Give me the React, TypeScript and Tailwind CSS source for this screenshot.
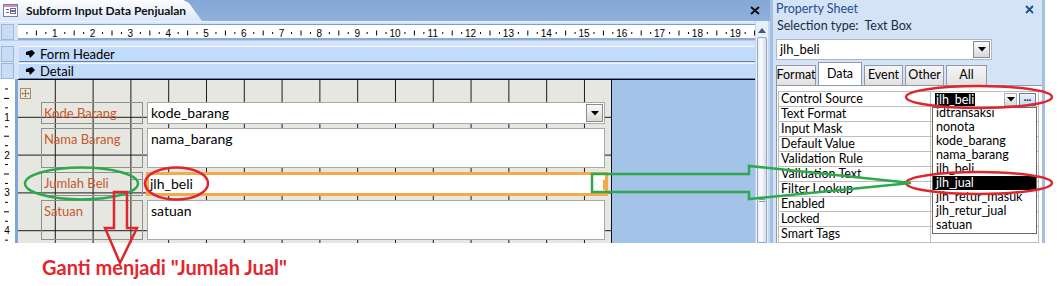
import React from "react";

const CM = 37.8;

function HRuler() {
  const w = 737;
  const items: React.ReactNode[] = [];
  for (let k = 0; k < 20; k++) {
    const base = -1 + k * CM;
    if (k > 0) {
      items.push(
        <text key={"n" + k} x={base} y={11.5} fontSize={10} textAnchor="middle" fill="#000" fontFamily="Liberation Sans, sans-serif">
          {k}
        </text>
      );
    }
    const q1 = base + CM * 0.25;
    const q2 = base + CM * 0.5;
    const q3 = base + CM * 0.75;
    items.push(<rect key={"a" + k} x={q1} y={7} width={1} height={2} fill="#000" />);
    items.push(<rect key={"b" + k} x={q2} y={5.5} width={1} height={5} fill="#000" />);
    items.push(<rect key={"c" + k} x={q3} y={7} width={1} height={2} fill="#000" />);
  }
  return (
    <svg width={w} height={15} className="block">
      {items}
    </svg>
  );
}

function VRuler() {
  const items: React.ReactNode[] = [];
  for (let k = 0; k < 5; k++) {
    const base = k * CM;
    if (k > 0) {
      items.push(
        <text key={"n" + k} x={7} y={base + 4} fontSize={10} textAnchor="middle" fill="#000" fontFamily="Liberation Sans, sans-serif">
          {k}
        </text>
      );
    }
    items.push(<rect key={"a" + k} x={5} y={base + CM * 0.25} width={3} height={1} fill="#000" />);
    items.push(<rect key={"b" + k} x={4} y={base + CM * 0.5} width={5} height={1} fill="#000" />);
    items.push(<rect key={"c" + k} x={5} y={base + CM * 0.75} width={3} height={1} fill="#000" />);
  }
  return (
    <svg width={15} height={164} className="block">
      {items}
    </svg>
  );
}

function SectionIcon() {
  return (
    <svg width="11" height="10" viewBox="0 0 11 10" className="block">
      <path d="M1 3 L7 1 L10 4 L5 9 L4 6 L1 6 Z" fill="#000" />
    </svg>
  );
}

function SectionBar({ label }: { label: string }) {
  return (
    <div className="flex h-[16px] gap-[5px]">
      <div className="w-[13px] ml-[1px] bg-[#c9dcf5] border border-[#9bb8df]" />
      <div className="flex-1 flex items-center gap-[4px] pl-[6px] bg-[#c3dbfa] border-t border-t-[#f4f8fe] border-b border-b-[#5d83bb] text-[13px] text-black leading-none">
        <SectionIcon />
        <span>{label}</span>
      </div>
    </div>
  );
}

const labelCls =
  "w-[102px] shrink-0 border-[1.5px] border-[#8e8e8e] px-[2px] pt-[2px] text-[13px] leading-[16px] text-[#c9572c]";
const boxCls = "w-[458px] shrink-0 bg-white border border-[#a8a8a8] px-[3px] pt-[1px] text-[14px] leading-[18px] text-black";

function MoveHandle() {
  return (
    <svg width="11" height="11" viewBox="0 0 11 11" className="block">
      <rect x="0.5" y="0.5" width="10" height="10" fill="#ece9dc" stroke="#9a8e80" />
      <path d="M5.5 2 V9 M2 5.5 H9" stroke="#a0785a" strokeWidth="1" />
      <path d="M5.5 1.5 L4 3 H7 Z M5.5 9.5 L4 8 H7 Z M1.5 5.5 L3 4 V7 Z M9.5 5.5 L8 4 V7 Z" fill="#a0785a" />
    </svg>
  );
}

function DropBtn({ className }: { className: string }) {
  return (
    <div className={"flex items-center justify-center border border-[#8a8a8a] bg-[linear-gradient(#fafafa,#d9d9d9)] " + className}>
      <svg width="8" height="5" viewBox="0 0 8 5">
        <path d="M0 0 H8 L4 4.5 Z" fill="#000" />
      </svg>
    </div>
  );
}

const props = [
  "Control Source",
  "Text Format",
  "Input Mask",
  "Default Value",
  "Validation Rule",
  "Validation Text",
  "Filter Lookup",
  "Enabled",
  "Locked",
  "Smart Tags",
];

const listItems = [
  "idtransaksi",
  "nonota",
  "kode_barang",
  "nama_barang",
  "jlh_beli",
  "jlh_jual",
  "jlh_retur_masuk",
  "jlh_retur_jual",
  "satuan",
];

export default function App() {
  return (
    <div className="relative w-[1058px] h-[286px] bg-white overflow-hidden font-['Lato',sans-serif]">
      <div className="flex h-[243px]">
        {/* Left design window */}
        <div className="w-[770px] shrink-0 flex flex-col bg-[#d6e4f6]">
          {/* Title bar */}
          <div className="h-[21px] flex bg-[linear-gradient(#86a8d6,#8fb0dc)] relative">
            <div className="w-[202px] h-[21px] flex items-center gap-[8px] pl-[3px] bg-[linear-gradient(#fdfeff,#dae7f7)] [clip-path:polygon(0_0,183px_0,189px_3px,202px_100%,0_100%)]">
              <svg width="15" height="13" viewBox="0 0 15 13" className="block">
                <rect x="0.5" y="0.5" width="14" height="12" fill="#fff" stroke="#7b7ba8" />
                <rect x="1" y="1" width="13" height="2" fill="#d78cb8" />
                <path d="M3 5.5 H6 M3 8.5 H6" stroke="#6a6a9a" />
                <rect x="7.5" y="4.5" width="5" height="2" fill="none" stroke="#6a6a9a" />
                <rect x="7.5" y="7.5" width="5" height="2" fill="none" stroke="#6a6a9a" />
              </svg>
              <span className="text-[12px] font-bold text-[#111] leading-none">Subform Input Data Penjualan</span>
            </div>
            <div className="flex-1" />
            <div className="w-[30px] flex items-center justify-center">
              <svg width="10" height="9" viewBox="0 0 10 9">
                <path d="M1 1 L9 8 M9 1 L1 8" stroke="#111" strokeWidth="2" />
              </svg>
            </div>
          </div>
          {/* Body */}
          <div className="flex flex-1">
            <div className="w-[755px] flex flex-col">
              {/* ruler row */}
              <div className="flex h-[19px] gap-[4px] pt-[2px] border-t border-[#eef4fc]">
                <div className="w-[13px] ml-[1px] bg-[#c9dcf5] border border-[#9bb8df]" />
                <div className="flex-1 bg-white border-t border-t-[#7c9fd0] border-b-2 border-b-[#8aabd8]">
                  <HRuler />
                </div>
              </div>
              <div className="h-[6px] border-t border-[#b3cbea]" />
              <SectionBar label="Form Header" />
              <div className="h-[1px]" />
              <SectionBar label="Detail" />
              {/* canvas row */}
              <div className="flex flex-1">
                <div className="w-[15px] bg-white">
                  <VRuler />
                </div>
                <div className="w-[3px] bg-[#7fa6dc]" />
                <div className="flex flex-1 border-t border-black">
                  <div className="w-[594px] shrink-0 border-r border-[#111] bg-[#e7e7e1] bg-[linear-gradient(to_right,transparent_37px,#1a1a1a_37px,#1a1a1a_38px,transparent_38px),linear-gradient(to_bottom,transparent_37px,#1a1a1a_37px,#1a1a1a_38px,transparent_38px)] bg-[size:37.8px_37.8px] pt-[8px] pl-[2px]">
                    <MoveHandle />
                    <div className="flex flex-col gap-[4px] mt-[3px] ml-[21px]">
                      <div className="flex gap-[4px] h-[22px]">
                        <div className={labelCls}>Kode Barang</div>
                        <div className={boxCls + " relative flex"}>
                          <span>kode_barang</span>
                          <div className="flex-1" />
                          <DropBtn className="w-[17px] h-[18px] mr-[-2px] border-[#7a7a7a]" />
                        </div>
                      </div>
                      <div className="flex gap-[4px] h-[40px]">
                        <div className={labelCls}>Nama Barang</div>
                        <div className={boxCls}>nama_barang</div>
                      </div>
                      <div className="flex gap-[4px] h-[24px]">
                        <div className={labelCls + " relative"}>
                          Jumlah Beli
                          <div className="absolute right-[-1px] top-[-1px] w-[12px] h-[8px] border border-[#8e8e8e] bg-[#e7e7e1]" />
                        </div>
                        <div className="w-[462px] ml-[-1px] shrink-0 bg-white border-[3px] border-[#f4aa4c] px-[1px] text-[14px] leading-[17px] text-black relative">
                          jlh_beli
                          <div className="absolute right-[-3px] top-[5px] w-[5px] h-[10px] bg-[#f4aa4c]" />
                        </div>
                      </div>
                      <div className="flex gap-[4px] h-[40px]">
                        <div className={labelCls}>Satuan</div>
                        <div className={boxCls}>satuan</div>
                      </div>
                    </div>
                  </div>
                  <div className="flex-1 bg-[#a4c3e9]" />
                </div>
              </div>
            </div>
            {/* scrollbar */}
            <div className="w-[13px] flex flex-col bg-[#e9eff8] border-l border-[#c5d4e8]">
              <div className="h-[16px] flex items-center justify-center pt-[2px]">
                <svg width="8" height="5" viewBox="0 0 8 5">
                  <path d="M0 5 L4 0 L8 5 Z" fill="#3c5a87" />
                </svg>
              </div>
              <div className="flex-1 mx-[1px] rounded-t-[2px] border border-[#98a9c2] bg-[linear-gradient(to_right,#e9eef6,#fbfcfe_40%,#d3dcea)] flex items-end justify-center pb-[40px]">
                <div className="flex flex-col gap-[1px]">
                  <div className="w-[6px] h-[1px] bg-[#8594ad]" />
                  <div className="w-[6px] h-[1px] bg-[#8594ad]" />
                  <div className="w-[6px] h-[1px] bg-[#8594ad]" />
                </div>
              </div>
            </div>
            <div className="w-[2px] bg-[#c9d9ee]" />
          </div>
        </div>

        {/* Property sheet */}
        <div className="w-[275px] shrink-0 flex flex-col bg-[#d5e3f6] border-l-[3px] border-r-[3px] border-[#a3bfe3]">
          <div className="h-[19px] flex items-center justify-between pl-[3px] pr-[8px]">
            <span className="text-[12.5px] text-[#1f4e8f] leading-none">Property Sheet</span>
            <svg width="9" height="9" viewBox="0 0 9 9">
              <path d="M1 1 L8 8 M8 1 L1 8" stroke="#1f4e8f" strokeWidth="1.8" />
            </svg>
          </div>
          <div className="h-[17px] pl-[4px] text-[12.5px] leading-[14px] text-[#1a2b44]">Selection type:&nbsp; Text Box</div>
          <div className="mt-[3px] ml-[3px] w-[216px] h-[21px] bg-white border border-[#a9b8cc] flex items-center pl-[3px] pr-[1px]">
            <span className="text-[13px] text-black flex-1">jlh_beli</span>
            <DropBtn className="w-[17px] h-[17px]" />
          </div>
          {/* tabs */}
          <div className="flex items-end h-[25px] ml-[3px] gap-[2px] text-[12.5px] text-black">
            <div className="w-[40px] h-[20px] border border-b-0 border-[#8f9aa8] bg-[linear-gradient(#f6f6f6,#e2e2e2)] flex items-center justify-center">Format</div>
            <div className="w-[44px] h-[23px] border border-b-0 border-[#8f9aa8] bg-white flex items-start pt-[2px] justify-center">Data</div>
            <div className="w-[39px] h-[20px] border border-b-0 border-[#8f9aa8] bg-[linear-gradient(#f6f6f6,#e2e2e2)] flex items-center justify-center">Event</div>
            <div className="w-[39px] h-[20px] border border-b-0 border-[#8f9aa8] bg-[linear-gradient(#f6f6f6,#e2e2e2)] flex items-center justify-center">Other</div>
            <div className="w-[41px] h-[20px] border border-b-0 border-[#8f9aa8] bg-[linear-gradient(#f6f6f6,#e2e2e2)] flex items-center justify-center">All</div>
          </div>
          <div className="flex-1 ml-[3px] bg-white border-l border-t border-[#8f9aa8] pt-[5px] pl-[1px] pr-[3px]">
            <div className="border border-[#bdbdbd] w-[261px]">
              {props.map((p, i) => (
                <div key={p} className={"flex h-[15px] " + (i < props.length - 1 ? "border-b border-[#bdbdbd]" : "")}>
                  <div className="w-[152px] shrink-0 border-r border-[#bdbdbd] pl-[2px] text-[12.5px] leading-[14px] text-black">{p}</div>
                  <div className="flex-1 flex items-center pl-[4px]">
                    {i === 0 && (
                      <>
                        <span className="bg-black text-white text-[12.5px] leading-[13px] px-[1px]">jlh_beli</span>
                        <div className="flex-1" />
                        <DropBtn className="w-[13px] h-[13px] border-[#b0b0b0]" />
                        <div className="w-[17px] h-[13px] ml-[2px] mr-[2px] border border-[#5d7fae] bg-[linear-gradient(#eaf2fc,#c6d9f1)] flex items-center justify-center text-[9px] font-bold leading-none text-[#123]">
                          ···
                        </div>
                      </>
                    )}
                  </div>
                </div>
              ))}
            </div>
          </div>
        </div>
      </div>

      {/* bottom annotation text */}
      <div className="pl-[42px] pt-[12px] text-[20px] font-bold leading-[24px] text-[#e3262d]">Ganti menjadi "Jumlah Jual"</div>

      {/* dropdown list overlay */}
      <div className="absolute left-[932px] top-[107px] w-[105px] h-[127px] bg-white border border-[#6a6a6a] overflow-hidden">
        <div className="mt-[-2px] flex flex-col">
          {listItems.map((it) => (
            <div
              key={it}
              className={
                "h-[14px] pl-[3px] text-[12.5px] leading-[14px] " +
                (it === "jlh_jual" ? "bg-black text-white" : "text-black")
              }
            >
              {it}
            </div>
          ))}
        </div>
      </div>

      {/* annotation drawings */}
      <svg className="absolute left-0 top-0 pointer-events-none" width="1058" height="286">
        <ellipse cx="81.5" cy="183.5" rx="56.5" ry="16" fill="none" stroke="#2ea84d" strokeWidth="2.5" />
        <ellipse cx="176.5" cy="183.5" rx="31.5" ry="16" fill="none" stroke="#e0262c" strokeWidth="2.5" />
        <ellipse cx="979" cy="97" rx="73" ry="11" fill="none" stroke="#e0262c" strokeWidth="2.5" />
        <ellipse cx="979" cy="183" rx="73" ry="11" fill="none" stroke="#e0262c" strokeWidth="2.5" />
        <polygon
          points="592,174 749,174 749,166 911,183 749,199 749,192 592,192"
          fill="none"
          stroke="#2ea84d"
          strokeWidth="2.5"
        />
        <polygon
          points="114,192 127,192 127,228 137,228 120,263 105,228 114,228"
          fill="none"
          stroke="#e0262c"
          strokeWidth="2.5"
        />
      </svg>
    </div>
  );
}
